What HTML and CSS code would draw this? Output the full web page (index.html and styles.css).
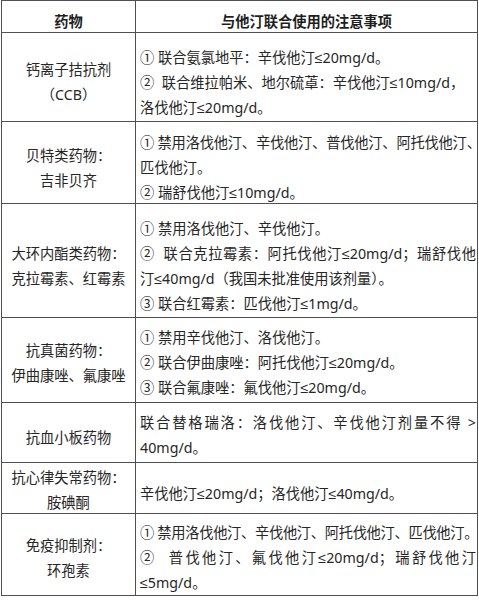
FILE: index.html
```html
<!DOCTYPE html>
<html lang="zh-CN">
<head>
<meta charset="utf-8">
<title>他汀联合用药注意事项</title>
<link rel="stylesheet" href="styles.css">
</head>
<body>
<div class="wrap">
  <div class="tbl">
    <div class="cell th"><div>药物</div></div>
    <div class="cell th"><div>与他汀联合使用的注意事项</div></div>

    <div class="cell drug"><div>钙离子拮抗剂</div><div>（CCB）</div></div>
    <div class="cell note">
      <div>① 联合氨氯地平：辛伐他汀<span class="le">≤</span>20mg/d。</div>
      <div>②&nbsp;&nbsp;联合维拉帕米、地尔硫䓬：辛伐他汀<span class="le">≤</span>10mg/d，</div>
      <div>洛伐他汀<span class="le">≤</span>20mg/d。</div>
    </div>

    <div class="cell drug"><div>贝特类药物：</div><div>吉非贝齐</div></div>
    <div class="cell note">
      <div class="just snug">① 禁用洛伐他汀、辛伐他汀、普伐他汀、阿托伐他汀、</div>
      <div>匹伐他汀。</div>
      <div>② 瑞舒伐他汀<span class="le">≤</span>10mg/d。</div>
    </div>

    <div class="cell drug"><div>大环内酯类药物：</div><div>克拉霉素、红霉素</div></div>
    <div class="cell note">
      <div>① 禁用洛伐他汀、辛伐他汀。</div>
      <div class="just">②&nbsp;&nbsp;联合克拉霉素：阿托伐他汀<span class="le">≤</span>20mg/d；瑞舒伐他</div>
      <div>汀<span class="le">≤</span>40mg/d（我国未批准使用该剂量）。</div>
      <div>③ 联合红霉素：匹伐他汀<span class="le">≤</span>1mg/d。</div>
    </div>

    <div class="cell drug r4"><div>抗真菌药物：</div><div>伊曲康唑、氟康唑</div></div>
    <div class="cell note r4">
      <div>① 禁用辛伐他汀、洛伐他汀。</div>
      <div>② 联合伊曲康唑：阿托伐他汀<span class="le">≤</span>20mg/d。</div>
      <div>③ 联合氟康唑：氟伐他汀<span class="le">≤</span>20mg/d。</div>
    </div>

    <div class="cell drug"><div>抗血小板药物</div></div>
    <div class="cell note r5">
      <div class="just">联合替格瑞洛：洛伐他汀、辛伐他汀剂量不得 &gt;</div>
      <div>40mg/d。</div>
    </div>

    <div class="cell drug r6"><div>抗心律失常药物：</div><div>胺碘酮</div></div>
    <div class="cell note">
      <div>辛伐他汀<span class="le">≤</span>20mg/d；洛伐他汀<span class="le">≤</span>40mg/d。</div>
    </div>

    <div class="cell drug r7"><div>免疫抑制剂：</div><div>环孢素</div></div>
    <div class="cell note r7">
      <div class="tight">① 禁用洛伐他汀、辛伐他汀、阿托伐他汀、匹伐他汀。</div>
      <div class="just">②&nbsp;&nbsp;普伐他汀、氟伐他汀<span class="le">≤</span>20mg/d；瑞舒伐他汀</div>
      <div><span class="le">≤</span>5mg/d。</div>
    </div>
  </div>
</div>
</body>
</html>
```

FILE: styles.css
```css
html, body {
  margin: 0;
  padding: 0;
  background: #ffffff;
}
.wrap {
  padding: 0 1px 0 1px;
}
.tbl {
  width: 477px;
  box-sizing: border-box;
  display: grid;
  grid-template-columns: 133px 341px;
  grid-template-rows: 31px 88px 81px 113px 84px 59px 50px 81px;
  gap: 1px;
  padding: 1px;
  background: #505050;
  font-family: "Noto Sans", "Noto Sans CJK SC", sans-serif;
  font-size: 14.25px;
  color: #262626;
}
.cell {
  background: #ffffff;
  display: flex;
  flex-direction: column;
  justify-content: center;
  padding-top: 10px;
  box-sizing: border-box;
  min-height: 0;
  overflow: visible;
}
.cell > div {
  height: 25px;
  line-height: 25px;
  flex: none;
}
.th {
  font-weight: bold;
  color: #1e1e1e;
  text-align: center;
}
.th > div {
  height: 20px;
  line-height: 20px;
}
.drug {
  text-align: center;
}
.note {
  text-align: left;
  padding-left: 4px;
  padding-right: 1px;
  white-space: nowrap;
}
.note .just {
  text-align: justify;
  text-align-last: justify;
}
.note .snug {
  letter-spacing: -0.2px;
}
.note .tight {
  letter-spacing: -0.3px;
}
.le {
  font-family: "Liberation Sans", sans-serif;
  line-height: 1;
}
.r4 { padding-top: 5px; }
.r5 { padding-top: 4px; }
.r6 { padding-top: 3px; }
.r7 { padding-top: 6px; }
```
